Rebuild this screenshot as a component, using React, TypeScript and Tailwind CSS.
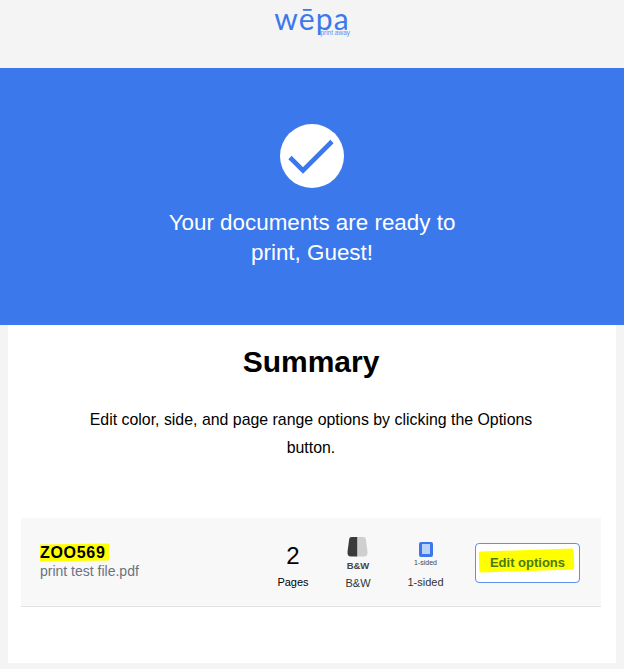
const sans = { fontFamily: '"Liberation Sans", Arial, sans-serif' };

function Logo() {
  return (
    <div className="relative flex h-[40px] w-[78px] justify-center text-[#3b78ec]">
      <span className="font-['Lato',sans-serif] text-[30px] font-normal leading-[28px] tracking-[1.2px]">wēpa</span>
      <span className="absolute right-[1px] top-[26px] text-[6.5px] leading-[6px] font-['Liberation_Sans',sans-serif] text-[#5f8ff0]">print away</span>
    </div>
  );
}

function CheckBadge() {
  return (
    <div className="h-16 w-16 rounded-full bg-white">
      <svg width="64" height="64" viewBox="0 0 64 64" fill="none">
        <path d="M10 33.5 L23 46.5 L52 17.5" stroke="#3b78ec" strokeWidth="4.6" />
      </svg>
    </div>
  );
}

function ColorIcon() {
  return (
    <div className="flex flex-col items-center pt-[2px]">
      <svg width="21" height="20" viewBox="0 0 21 20">
        <path d="M10.5 0 H4.5 Q2.5 0 2.2 2 L0.5 15 Q0.3 19.5 4 19.5 H10.5 Z" fill="#3a3a3a" />
        <path d="M10.5 0 H16.5 Q18.5 0 18.8 2 L20.5 15 Q20.7 19.5 17 19.5 H10.5 Z" fill="#cfcfcf" />
      </svg>
      <span className="mt-[3px] text-[9.5px] font-bold leading-[11px] text-[#444]">B&amp;W</span>
    </div>
  );
}

function SidedIcon() {
  return (
    <div className="flex flex-col items-center pt-[4px]">
      <div className="flex h-[15px] w-[14px] items-center justify-center rounded-[2px] bg-[#3b78ec]">
        <div className="h-[10px] w-[8px] bg-[#b9d2fa]" />
      </div>
      <span className="mt-[1px] text-[7px] leading-[10px] text-[#444]">1-sided</span>
    </div>
  );
}

export default function App() {
  return (
    <div className="flex h-[669px] w-[624px] flex-col overflow-hidden bg-[#f4f4f4] text-black" style={sans}>
      <header className="flex h-[68px] justify-center pt-[4px]">
        <Logo />
      </header>

      <section className="flex h-[257px] flex-col items-center bg-[#3b78ec] pt-[56px] text-white">
        <CheckBadge />
        <p className="mt-[20px] w-[320px] text-center text-[22.4px] leading-[30px]">
          Your documents are ready to print, Guest!
        </p>
      </section>

      <main className="mx-2 h-[338px] bg-white pl-[13px] pr-[15px]">
        <h1 className="pt-[19px] text-center text-[30px] font-bold leading-[36px]">Summary</h1>
        <p className="mx-auto mt-[26px] w-[460px] text-center text-[15.9px] leading-[28px]">
          Edit color, side, and page range options by clicking the Options button.
        </p>

        <div className="mt-[56px] flex h-[89px] items-center border-b border-[#e2e2e2] bg-[#f8f8f8] pl-[19px] pr-[21px]">
          <div className="w-[219px]">
            <div className="relative">
              <div className="absolute left-0 top-0 h-[17px] w-[69px] -skew-y-1 bg-[#ffff00]" />
              <div className="relative text-[16px] font-bold leading-[18px] tracking-[0.7px]">ZOO569</div>
            </div>
            <div className="mt-[1px] text-[14px] leading-[17px] text-[#6b7280]">print test file.pdf</div>
          </div>

          <div className="flex w-[68px] flex-col items-center pt-[7px]">
            <span className="text-[24px] leading-[28px]">2</span>
            <span className="mt-[5px] text-[11px] leading-[14px]">Pages</span>
          </div>

          <div className="flex w-[62px] flex-col items-center">
            <ColorIcon />
            <span className="mt-[5px] text-[11px] leading-[14px] text-[#333]">B&amp;W</span>
          </div>

          <div className="flex w-[73px] flex-col items-center pt-[2px]">
            <SidedIcon />
            <span className="mt-[7px] text-[11px] leading-[14px] text-[#333]">1-sided</span>
          </div>

          <button className="relative ml-auto mt-[2px] h-[40px] w-[105px] rounded-[4px] border border-[#5f8ff0] bg-white pb-[2px]">
            <span className="absolute left-[3px] top-[6px] h-[21px] w-[95px] -rotate-2 rounded-[2px] bg-[#ffff00]" />
            <span className="relative text-[13px] font-bold text-[#4a7a10]">Edit options</span>
          </button>
        </div>
      </main>
    </div>
  );
}
